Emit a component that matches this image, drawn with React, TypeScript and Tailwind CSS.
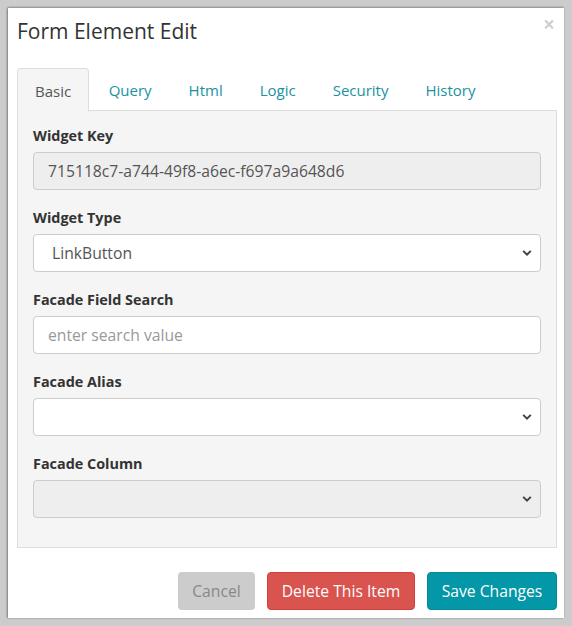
import React from "react";

const font = { fontFamily: '"Open Sans", "Noto Sans", Arial, sans-serif' };

function Chevron() {
  return (
    <svg width="10" height="7" viewBox="0 0 10 7" className="absolute right-[8px] top-1/2 -translate-y-1/2">
      <path d="M1.2 1.4 L5 5.2 L8.8 1.4" fill="none" stroke="#444" strokeWidth="2" />
    </svg>
  );
}

function Field({ label, children }: { label: string; children: React.ReactNode }) {
  return (
    <div className="mb-[18px]">
      <div className="text-[14.4px] leading-[20px] font-bold text-[#333] mb-[6px]">{label}</div>
      {children}
    </div>
  );
}

export default function App() {
  const tabs = ["Basic", "Query", "Html", "Logic", "Security", "History"];
  return (
    <div className="w-[572px] h-[626px] bg-[#cccccc] pt-[8px] pl-[8px] overflow-hidden" style={font}>
      <div className="relative w-[556px] h-[610px] bg-white shadow-[-1px_0_2px_rgba(0,0,0,0.35),0_-1px_2px_rgba(0,0,0,0.2)]">
        <div className="absolute right-[9px] top-[6px] text-[21px] leading-[21px] font-bold text-black/20">×</div>
        <div className="pl-[9px] pt-[9px] h-[60px]">
          <h4 className="text-[21px] leading-[28px] text-[#333]">Form Element Edit</h4>
        </div>
        <div className="pl-[9px] pr-[7px]">
          <div className="flex h-[43px] border-b border-[#dddddd]">
            {tabs.map((t, i) => (
              <div
                key={t}
                className={
                  i === 0
                    ? "px-[17px] pt-[2px] mr-[2px] -mb-px h-[44px] flex items-center text-[15px] text-[#555] bg-[#f5f5f5] border border-[#dddddd] border-b-transparent rounded-t-[4px]"
                    : "px-[17.5px] pt-[2px] mr-[2px] h-[43px] flex items-center text-[15px] text-[#1a92a2]"
                }
              >
                {t}
              </div>
            ))}
          </div>
          <div className="h-[437px] bg-[#f5f5f5] border border-t-0 border-[#dddddd] px-[15px] pt-[15px]">
            <Field label="Widget Key">
              <div className="h-[38px] bg-[#eeeeee] border border-[#cccccc] rounded-[4px] pl-[14px] pt-[2px] flex items-center text-[15.7px] text-[#555]">
                715118c7-a744-49f8-a6ec-f697a9a648d6
              </div>
            </Field>
            <Field label="Widget Type">
              <div className="relative h-[38px] bg-white border border-[#cccccc] rounded-[4px] pl-[18px] pt-[2px] flex items-center text-[15.7px] text-[#555]">
                LinkButton
                <Chevron />
              </div>
            </Field>
            <Field label="Facade Field Search">
              <div className="h-[38px] bg-white border border-[#cccccc] rounded-[4px] pl-[14px] pt-[2px] flex items-center text-[15.7px] text-[#999]">
                enter search value
              </div>
            </Field>
            <Field label="Facade Alias">
              <div className="relative h-[38px] bg-white border border-[#cccccc] rounded-[4px]">
                <Chevron />
              </div>
            </Field>
            <Field label="Facade Column">
              <div className="relative h-[38px] bg-[#eeeeee] border border-[#cccccc] rounded-[4px]">
                <Chevron />
              </div>
            </Field>
          </div>
          <div className="flex justify-end gap-[12px] mt-[24px]">
            <div className="w-[77px] h-[38px] pt-[2px] rounded-[4px] bg-[#cccccc] text-[#888] text-[15.7px] flex items-center justify-center">Cancel</div>
            <div className="w-[148px] h-[38px] pt-[2px] rounded-[4px] bg-[#d9534f] border border-[#d43f3a] text-white text-[15.7px] flex items-center justify-center">Delete This Item</div>
            <div className="w-[130px] h-[38px] pt-[2px] rounded-[4px] bg-[#0397a7] border border-[#038a99] text-white text-[15.7px] flex items-center justify-center">Save Changes</div>
          </div>
        </div>
      </div>
    </div>
  );
}
